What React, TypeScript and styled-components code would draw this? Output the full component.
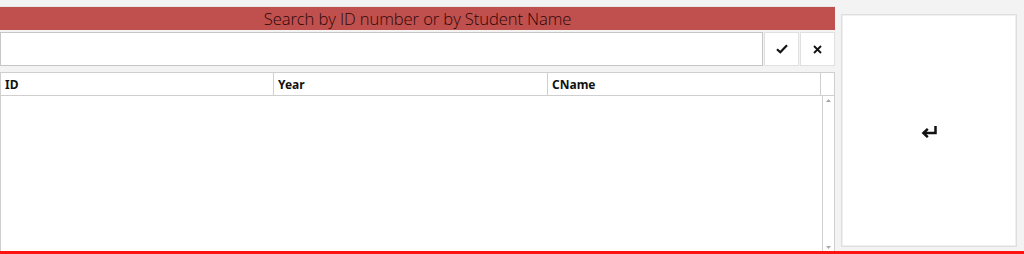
import React from 'react';
import styled, { createGlobalStyle } from 'styled-components';

const GlobalStyle = createGlobalStyle`
  html, body {
    margin: 0;
    padding: 0;
    background: #f3f3f3;
  }
  * {
    box-sizing: border-box;
  }
`;

const Window = styled.div`
  display: flex;
  gap: 6px;
  width: 1024px;
  height: 254px;
  overflow: hidden;
  border-bottom: 3px solid #ff1212;
  background: #f3f3f3;
  font-family: 'Open Sans', 'Noto Sans', sans-serif;
`;

const SearchColumn = styled.div`
  display: flex;
  flex-direction: column;
  width: 835px;
  padding-top: 6px;
  flex-shrink: 0;
`;

const TitleBar = styled.div`
  height: 24px;
  border-top: 1px solid #e6e6e6;
  background: #c0504d;
  color: #2c0606;
  font-weight: 300;
  font-size: 16.6px;
  line-height: 23px;
  text-align: center;
  letter-spacing: -0.1px;
`;

const InputRow = styled.div`
  display: flex;
  height: 34px;
  margin-top: 2px;
`;

const SearchInput = styled.input`
  flex: 1;
  height: 100%;
  margin: 0;
  padding: 0 6px;
  border: 1px solid #c6c6c6;
  background: #fff;
  outline: none;
  font-family: inherit;
  font-size: 14px;
`;

const IconButton = styled.button`
  display: flex;
  align-items: center;
  justify-content: center;
  width: 35px;
  height: 100%;
  margin: 0 0 0 1px;
  padding: 0;
  border: 1px solid #e0e0e0;
  background: #fff;
  cursor: pointer;
`;

const Grid = styled.div`
  display: flex;
  flex-direction: column;
  flex: 1;
  margin-top: 6px;
  border: 1px solid #cfcfcf;
  border-bottom: none;
  background: #fff;
`;

const HeaderRow = styled.div`
  display: grid;
  grid-template-columns: 273px 274px 273px 1fr;
  height: 23px;
  border-bottom: 1px solid #cfcfcf;
`;

const HeaderCell = styled.div<{ $last?: boolean }>`
  padding-left: 4px;
  border-right: ${({ $last }) => ($last ? 'none' : '1px solid #cfcfcf')};
  color: #111;
  font-family: 'Noto Sans', 'Open Sans', sans-serif;
  font-weight: 700;
  font-size: 12px;
  line-height: 23px;
  white-space: nowrap;
`;

const Body = styled.div`
  display: flex;
  flex: 1;
`;

const Rows = styled.div`
  flex: 1;
`;

const ScrollTrack = styled.div`
  display: flex;
  flex-direction: column;
  justify-content: space-between;
  align-items: center;
  width: 12px;
  padding: 3px 0 2px;
  border-left: 1px solid #cfcfcf;
`;

const SidePanel = styled.div`
  display: flex;
  align-items: center;
  justify-content: center;
  width: 176px;
  height: 233px;
  margin-top: 14px;
  border: 1px solid #dedede;
  box-shadow: inset 0 0 0 1px #f0f0f0;
  background: #fff;
`;

const Arrow = ({ up }: { up?: boolean }) => (
  <svg width="5" height="3" viewBox="0 0 5 3">
    <path d={up ? 'M0 3 L2.5 0 L5 3 Z' : 'M0 0 L2.5 3 L5 0 Z'} fill="#a8a8a8" />
  </svg>
);

export default function App() {
  return (
    <>
      <GlobalStyle />
      <Window>
        <SearchColumn>
          <TitleBar>Search by ID number or by Student Name</TitleBar>
          <InputRow>
            <SearchInput />
            <IconButton aria-label="ok">
              <svg width="12" height="10" viewBox="0 0 12 10">
                <path d="M1 5.2 L4.3 8.3 L11 1.2" fill="none" stroke="#111" strokeWidth="2.2" />
              </svg>
            </IconButton>
            <IconButton aria-label="clear">
              <svg width="9" height="9" viewBox="0 0 9 9">
                <path d="M1 1 L8 8 M8 1 L1 8" fill="none" stroke="#111" strokeWidth="1.8" />
              </svg>
            </IconButton>
          </InputRow>
          <Grid>
            <HeaderRow>
              <HeaderCell>ID</HeaderCell>
              <HeaderCell>Year</HeaderCell>
              <HeaderCell>CName</HeaderCell>
              <HeaderCell $last />
            </HeaderRow>
            <Body>
              <Rows />
              <ScrollTrack>
                <Arrow up />
                <Arrow />
              </ScrollTrack>
            </Body>
          </Grid>
        </SearchColumn>
        <SidePanel>
          <svg width="17" height="13" viewBox="0 0 17 13" style={{ marginTop: 2 }}>
            <path d="M14.5 1 V8 H3" fill="none" stroke="#111" strokeWidth="2.5" />
            <path d="M6.8 3.8 L2.4 8 L6.8 12.2" fill="none" stroke="#111" strokeWidth="2.5" />
          </svg>
        </SidePanel>
      </Window>
    </>
  );
}
